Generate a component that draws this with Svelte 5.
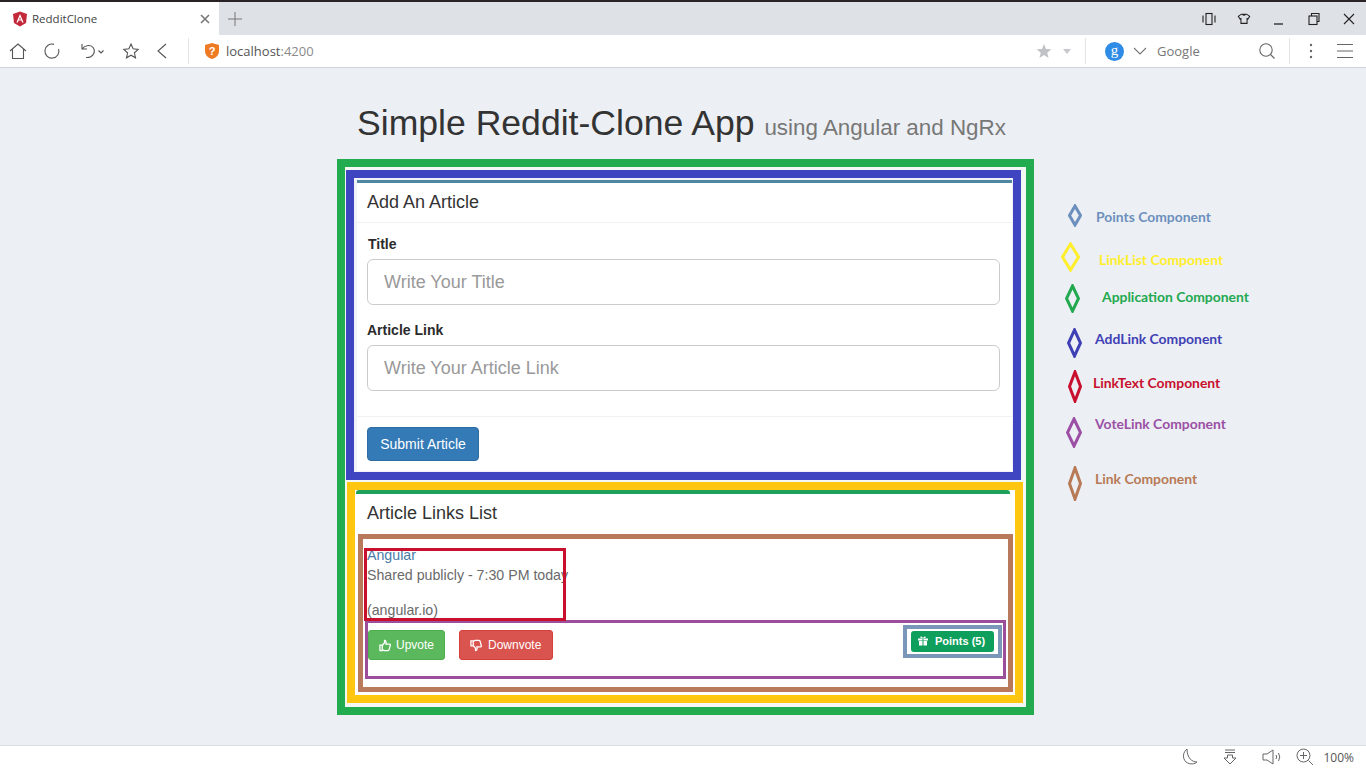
<script>
  // annotation key on the right of the page, placed freely like in the screenshot
  const legend = [
    { label: 'Points Component', color: '#6d8fbd', dx: 1068, dy: 204, w: 14, h: 23, tx: 1096, ty: 217 },
    { label: 'LinkList Component', color: '#ffee2b', dx: 1061, dy: 242, w: 19, h: 30, tx: 1099, ty: 260 },
    { label: 'Application Component', color: '#22a94f', dx: 1065, dy: 284, w: 15, h: 29, tx: 1102, ty: 297 },
    { label: 'AddLink Component', color: '#3f3fb5', dx: 1067, dy: 328, w: 15, h: 30, tx: 1095, ty: 339 },
    { label: 'LinkText Component', color: '#c8102e', dx: 1068, dy: 370, w: 14, h: 33, tx: 1093, ty: 383 },
    { label: 'VoteLink Component', color: '#9b4fa5', dx: 1066, dy: 417, w: 16, h: 31, tx: 1095, ty: 424 },
    { label: 'Link Component', color: '#b87a56', dx: 1068, dy: 466, w: 14, h: 35, tx: 1095, ty: 479 }
  ]
</script>

<div class="browser">
  <!-- tab strip -->
  <div class="tabstrip">
    <div class="tab">
      <svg class="favicon" width="16" height="16" viewBox="0 0 16 16">
        <path d="M8 0.5 L15 3 L14 12 L8 15.5 L2 12 L1 3 Z" fill="#c3273a" />
        <path d="M8 3 L4.4 11.5 H5.9 L6.6 9.6 H9.4 L10.1 11.5 H11.6 Z M7.1 8.4 L8 6 L8.9 8.4 Z" fill="#fff" />
      </svg>
      <span class="tab-title">RedditClone</span>
      <svg class="tab-close" width="10" height="10" viewBox="0 0 10 10">
        <path d="M1 1 L9 9 M9 1 L1 9" stroke="#777" stroke-width="1.6" />
      </svg>
    </div>
    <svg class="tab-new" width="14" height="14" viewBox="0 0 14 14">
      <path d="M7 0 V14 M0 7 H14" stroke="#777" stroke-width="1" />
    </svg>
    <div class="win-controls">
      <svg width="14" height="14" viewBox="0 0 14 14" fill="none" stroke="#222" stroke-width="1.1">
        <rect x="4" y="1.5" width="6" height="11" />
        <path d="M1 3.5 V10.5 M13 3.5 V10.5" />
      </svg>
      <svg width="14" height="14" viewBox="0 0 16 14" fill="none" stroke="#222" stroke-width="1.2">
        <path d="M5 1.5 H11 L14.5 4 L12.5 7 L11.5 6.5 V12 H4.5 V6.5 L3.5 7 L1.5 4 Z M6 1.5 Q8 4 10 1.5" />
      </svg>
      <svg width="14" height="14" viewBox="0 0 14 14" fill="none" stroke="#222" stroke-width="1.3">
        <path d="M2 12 H11" />
      </svg>
      <svg width="14" height="14" viewBox="0 0 14 14" fill="none" stroke="#222" stroke-width="1.1">
        <rect x="2" y="4" width="8" height="8.5" />
        <path d="M4.5 4 V1.5 H12 V9.5 H10" />
      </svg>
      <svg width="14" height="14" viewBox="0 0 14 14" fill="none" stroke="#222" stroke-width="1.1">
        <path d="M2 2 L12 12 M12 2 L2 12" />
      </svg>
    </div>
  </div>

  <!-- address toolbar -->
  <div class="toolbar">
    <svg class="t-home" width="20" height="20" viewBox="0 0 20 20" fill="none" stroke="#555" stroke-width="1.1">
      <path d="M2 10 L10 3 L18 10 M4.5 8.5 V17.5 H15.5 V8.5" />
    </svg>
    <svg class="t-reload" width="20" height="20" viewBox="0 0 20 20" fill="none" stroke="#555" stroke-width="1.1">
      <path d="M12 3.4 A7 7 0 1 0 16.6 8" />
    </svg>
    <svg class="t-undo" width="30" height="20" viewBox="0 0 30 20" fill="none" stroke="#555" stroke-width="1.1">
      <path d="M4 3 V8 H9 M4 8 C7 4 13 3 15.5 7 C18 12 14 17 8 16.5" />
      <path d="M20.5 9.5 L23 12 L25.5 9.5" />
    </svg>
    <svg class="t-star" width="20" height="20" viewBox="0 0 20 20" fill="none" stroke="#555" stroke-width="1.1">
      <path d="M10 3 L12.1 7.8 L17.2 8.4 L13.4 11.8 L14.5 16.8 L10 14.2 L5.5 16.8 L6.6 11.8 L2.8 8.4 L7.9 7.8 Z" />
    </svg>
    <svg class="t-back" width="20" height="20" viewBox="0 0 20 20" fill="none" stroke="#555" stroke-width="1.1">
      <path d="M14 3 L6 10 L14 17" />
    </svg>
    <span class="t-sep first"></span>
    <svg class="t-shield" width="16" height="18" viewBox="0 0 16 18">
      <path d="M8 1 L15 3 V9 C15 13 12 16 8 17 C4 16 1 13 1 9 V3 Z" fill="#ee7a22" />
      <text x="8" y="13" text-anchor="middle" class="shield-q">?</text>
    </svg>
    <span class="url">localhost<span class="port">:4200</span></span>

    <svg class="t-fav" width="16" height="16" viewBox="0 0 16 16">
      <path d="M8 1 L10 6 L15.4 6.3 L11.2 9.7 L12.6 15 L8 12 L3.4 15 L4.8 9.7 L0.6 6.3 L6 6 Z" fill="#bfc2c6" />
    </svg>
    <svg class="t-caret" width="8" height="5" viewBox="0 0 8 5"><path d="M0 0 H8 L4 5 Z" fill="#c6c8cc" /></svg>
    <span class="t-sep second"></span>
    <span class="g-badge">g</span>
    <svg class="t-chev" width="14" height="8" viewBox="0 0 14 8" fill="none" stroke="#777" stroke-width="1.1">
      <path d="M1 1 L7 7 L13 1" />
    </svg>
    <span class="search-text">Google</span>
    <svg class="t-search" width="18" height="18" viewBox="0 0 18 18" fill="none" stroke="#666" stroke-width="1.1">
      <circle cx="8" cy="8" r="6.2" />
      <path d="M12.5 12.5 L16.5 16.5" />
    </svg>
    <span class="t-sep third"></span>
    <svg class="t-dots" width="4" height="16" viewBox="0 0 4 16" fill="#666">
      <circle cx="2" cy="2" r="1.2" /><circle cx="2" cy="8" r="1.2" /><circle cx="2" cy="14" r="1.2" />
    </svg>
    <svg class="t-menu" width="16" height="16" viewBox="0 0 16 16" stroke="#666" stroke-width="1">
      <path d="M0 1.5 H16 M0 8 H16 M0 14.5 H16" />
    </svg>
  </div>

  <!-- page -->
  <main class="page">
    <h1>Simple Reddit-Clone App <small>using Angular and NgRx</small></h1>

    <div class="app-frame">
      <section class="addlink-frame">
        <div class="panel add-panel">
          <h3 class="panel-heading">Add An Article</h3>
          <div class="panel-body">
            <label for="title">Title</label>
            <input id="title" placeholder="Write Your Title" />
            <label for="link" class="second-label">Article Link</label>
            <input id="link" placeholder="Write Your Article Link" />
          </div>
          <div class="panel-footer">
            <button class="btn-submit">Submit Article</button>
          </div>
        </div>
      </section>

      <section class="list-frame">
        <div class="list-panel">
          <h3 class="panel-heading">Article Links List</h3>
        </div>
        <div class="link-frame">
          <div class="link-text">
            <a href="#top">Angular</a>
            <div>Shared publicly - 7:30 PM today</div>
            <div class="domain">(angular.io)</div>
            <span class="linktext-outline"></span>
          </div>
          <div class="vote-frame">
            <div class="votes">
              <button class="btn up">
                <svg width="12" height="13" viewBox="0 0 13 13" fill="none" stroke="#fff" stroke-width="1.4">
                  <path d="M1 6 H3.5 V12 H1 Z M3.5 6.5 L6 3.5 V1 C7.5 1 8 2.5 7.5 5 H11.5 C12.5 5 12.5 6 12 7 L11 11 C10.8 11.8 10.4 12 9.5 12 H5.5 L3.5 11" />
                </svg>
                Upvote
              </button>
              <button class="btn down">
                <svg width="12" height="13" viewBox="0 0 13 13" fill="none" stroke="#fff" stroke-width="1.4">
                  <path d="M1 1.5 H3.5 V7 H1 Z M3.5 6.5 L6 9.5 V12 C7.5 12 8 10.5 7.5 8 H11.5 C12.5 8 12.5 7 12 6 L11 2 C10.8 1.2 10.4 1 9.5 1 H5.5 L3.5 2" />
                </svg>
                Downvote
              </button>
            </div>
            <div class="points-frame">
              <button class="btn-points">
                <svg width="10" height="10" viewBox="0 0 10 10" fill="#fff">
                  <path d="M0 2.5 H4.5 V4.5 H0 Z M5.5 2.5 H10 V4.5 H5.5 Z M1 5 H4.5 V9.5 H1 Z M5.5 5 H9 V9.5 H5.5 Z" />
                  <path d="M5 2.5 C3 2.5 1.5 1.5 2.5 0.6 C3.5 0 4.6 1 5 2.5 C5.4 1 6.5 0 7.5 0.6 C8.5 1.5 7 2.5 5 2.5 Z" />
                </svg>
                Points (5)
              </button>
            </div>
          </div>
        </div>
      </section>
    </div>

    {#each legend as item}
      <svg
        class="diamond"
        style="left:{item.dx}px; top:{item.dy - 68}px"
        width={item.w}
        height={item.h}
        viewBox="0 0 {item.w} {item.h}"
      >
        <polygon
          points="{item.w / 2},2 {item.w - 1.5},{item.h / 2} {item.w / 2},{item.h - 2} 1.5,{item.h / 2}"
          fill="none"
          stroke={item.color}
          stroke-width="3"
        />
      </svg>
      <span class="legend-label" style="left:{item.tx}px; top:{item.ty - 68 - 9}px; color:{item.color}">{item.label}</span>
    {/each}
  </main>

  <!-- status bar -->
  <div class="statusbar">
    <svg class="s-moon" width="16" height="18" viewBox="0 0 16 18" fill="none" stroke="#666" stroke-width="1">
      <path d="M5 1 C1 4 0 10 4 14 C8 17 13 16 15 14 C10 14 5 10 5 1 Z" />
    </svg>
    <svg class="s-down" width="14" height="16" viewBox="0 0 14 16" fill="none" stroke="#666" stroke-width="1">
      <path d="M2 1 H12 M2 3.5 H12 M4.5 6 H9.5 V9 H13 L7 15 L1 9 H4.5 Z" />
    </svg>
    <svg class="s-sound" width="20" height="16" viewBox="0 0 20 16" fill="none" stroke="#666" stroke-width="1">
      <path d="M1 5 H5 L11 1 V15 L5 11 H1 Z M14 6 Q15.5 8 14 10 M16.5 4 Q19 8 16.5 12" />
    </svg>
    <svg class="s-zoom" width="18" height="18" viewBox="0 0 18 18" fill="none" stroke="#666" stroke-width="1">
      <circle cx="7.5" cy="7.5" r="6.5" />
      <path d="M7.5 4 V11 M4 7.5 H11 M12.5 12.5 L17 17" />
    </svg>
    <span class="zoom-level">100%</span>
  </div>
</div>

<style>
  :global(body) {
    margin: 0;
    overflow: hidden;
    font-family: "Liberation Sans", Arial, sans-serif;
  }

  .browser {
    width: 1366px;
    height: 768px;
    display: flex;
    flex-direction: column;
    background: #eceff4;
  }

  /* ---- browser chrome ---- */
  .tabstrip {
    height: 33px;
    border-top: 2px solid #2a2326;
    background: #dee1e6;
    display: flex;
    align-items: center;
    flex-shrink: 0;
  }

  .tab {
    width: 219px;
    height: 33px;
    background: #fff;
    display: flex;
    align-items: center;
    box-sizing: border-box;
    padding-left: 12px;
  }

  .tab-title {
    font-family: "Open Sans", sans-serif;
    font-size: 11.5px;
    color: #444;
    margin-left: 4px;
  }

  .tab-close {
    margin-left: auto;
    margin-right: 9px;
  }

  .tab-new {
    margin-left: 9px;
  }

  .win-controls {
    margin-left: auto;
    display: flex;
    align-items: center;
    gap: 21px;
    padding-right: 10px;
  }

  .toolbar {
    height: 32px;
    background: #fff;
    border-bottom: 1px solid #cfd3da;
    display: flex;
    align-items: center;
    flex-shrink: 0;
    padding-left: 8px;
  }

  .t-reload { margin-left: 14px; }
  .t-undo { margin-left: 16px; }
  .t-star { margin-left: 13px; }
  .t-back { margin-left: 11px; }

  .t-sep {
    width: 1px;
    height: 26px;
    background: #e3e5e8;
  }

  .t-sep.first { margin-left: 16px; }
  .t-shield { margin-left: 15px; }

  .shield-q {
    font-family: "Liberation Sans", sans-serif;
    font-size: 11px;
    font-weight: 700;
    fill: #fff;
  }

  .url {
    margin-left: 6px;
    font-family: "Open Sans", sans-serif;
    font-size: 13px;
    color: #555;
    width: 90px;
  }

  .port { color: #8a8a8a; }

  .t-fav { margin-left: 720px; }
  .t-caret { margin-left: 11px; }
  .t-sep.second { margin-left: 14px; }

  .g-badge {
    margin-left: 19px;
    width: 19px;
    height: 19px;
    border-radius: 50%;
    background: #2e8be6;
    color: #fff;
    font-family: "Liberation Serif", serif;
    font-size: 15px;
    line-height: 16px;
    text-align: center;
  }

  .t-chev { margin-left: 9px; }

  .search-text {
    margin-left: 10px;
    font-family: "Open Sans", sans-serif;
    font-size: 13px;
    color: #777;
    width: 101px;
  }

  .t-search { margin-left: 0; }
  .t-sep.third { margin-left: 13px; }
  .t-dots { margin-left: 19px; }
  .t-menu { margin-left: 24px; }

  .statusbar {
    height: 22px;
    background: #fff;
    border-top: 1px solid #dcdfe4;
    display: flex;
    align-items: center;
    justify-content: flex-end;
    flex-shrink: 0;
    padding-right: 12px;
  }

  .s-down { margin-left: 25px; }
  .s-sound { margin-left: 25px; }
  .s-zoom { margin-left: 14px; }

  .zoom-level {
    margin-left: 9px;
    font-family: "Open Sans", sans-serif;
    font-size: 12px;
    color: #555;
  }

  /* ---- page ---- */
  .page {
    flex: 1;
    position: relative;
  }

  h1 {
    margin: 0;
    padding: 36px 0 0 357px;
    height: 55px;
    font-size: 35.6px;
    font-weight: 400;
    line-height: 39px;
    color: #333;
  }

  h1 small {
    font-size: 22.4px;
    color: #777;
  }

  .app-frame {
    box-sizing: border-box;
    margin-left: 337px;
    width: 697px;
    height: 556px;
    border: 8px solid #22ab4f;
    background: #f4f8f4;
    padding: 3px 0 0 1px;
  }

  .addlink-frame {
    box-sizing: border-box;
    width: 675px;
    height: 310px;
    border: 8px solid #3f44c0;
    padding: 2px 1px 1px 3px;
    background: #f0f2fa;
  }

  .add-panel {
    height: 100%;
    border-top: 3px solid #4f87a0;
    background: #fff;
    box-sizing: border-box;
  }

  .panel-heading {
    margin: 0;
    height: 40px;
    box-sizing: border-box;
    padding: 0 10px;
    font-size: 18px;
    font-weight: 400;
    line-height: 39px;
    color: #333;
    border-bottom: 1px solid #f1f1f1;
  }

  .panel-body {
    padding: 13px 11px 0 10px;
    height: 194px;
    box-sizing: border-box;
    border-bottom: 1px solid #f1f1f1;
  }

  label {
    display: block;
    margin-left: 1px;
    font-size: 14px;
    font-weight: 700;
    line-height: 16px;
    color: #2b2b2b;
    margin-bottom: 7px;
  }

  .second-label {
    margin-top: 17px;
    margin-left: 0;
  }

  input {
    display: block;
    box-sizing: border-box;
    width: 633px;
    height: 46px;
    padding: 0 16px;
    border: 1px solid #ccc;
    border-radius: 6px;
    background: #fff;
    font-family: inherit;
    font-size: 18px;
    color: #555;
  }

  input::placeholder {
    color: #999;
    opacity: 1;
  }

  .panel-footer {
    padding: 10px;
  }

  .btn-submit {
    width: 112px;
    height: 34px;
    border: 1px solid #2e6da4;
    border-radius: 4px;
    background: #337ab7;
    color: #fff;
    font-family: inherit;
    font-size: 14px;
    padding: 0;
  }

  .list-frame {
    box-sizing: border-box;
    margin: 2px 0 0 1px;
    width: 676px;
    height: 221px;
    border: 8px solid #fec60f;
    background: #fff;
  }

  .list-panel {
    margin: 0 5px 0 1px;
    border-top: 4px solid #1ea25b;
    border-radius: 3px 3px 0 0;
  }

  .list-panel .panel-heading {
    border-bottom: none;
    padding: 0 11px;
  }

  .link-frame {
    box-sizing: border-box;
    width: 655px;
    height: 158px;
    margin-left: 3px;
    border: 5px solid #b87a5a;
    padding-top: 6px;
    font-size: 14.2px;
    line-height: 20px;
    color: #6a6a6a;
  }

  .link-text {
    position: relative;
    height: 75px;
    padding-left: 4px;
  }

  .link-text a {
    color: #4a7ba6;
    text-decoration: none;
    display: block;
  }

  .domain {
    margin-top: 15px;
  }

  /* red annotation box drawn over the text */
  .linktext-outline {
    position: absolute;
    left: 1px;
    top: 3px;
    width: 202px;
    height: 73px;
    box-sizing: border-box;
    border: 3px solid #c8102e;
  }

  .vote-frame {
    box-sizing: border-box;
    width: 641px;
    height: 59px;
    margin-left: 2px;
    border: 3px solid #9b4f9b;
    display: flex;
    justify-content: space-between;
    align-items: flex-start;
    padding-right: 1px;
  }

  .votes {
    display: flex;
    gap: 14px;
    padding-top: 7px;
  }

  .btn {
    height: 30px;
    border-radius: 3px;
    color: #fff;
    font-family: inherit;
    font-size: 12px;
    display: flex;
    align-items: center;
    gap: 5px;
    box-sizing: border-box;
    padding: 0 0 0 10px;
  }

  .up {
    width: 77px;
    background: #5cb85c;
    border: 1px solid #4cae4c;
  }

  .down {
    width: 94px;
    background: #d9534f;
    border: 1px solid #d43f3a;
    gap: 6px;
  }

  .points-frame {
    margin-top: 2px;
    box-sizing: border-box;
    width: 99px;
    height: 33px;
    border: 4px solid #7a96b8;
    padding: 2px 4px;
  }

  .btn-points {
    width: 83px;
    height: 21px;
    background: #0f9f5c;
    border: none;
    border-radius: 3px;
    color: #fff;
    font-family: inherit;
    font-size: 11px;
    font-weight: 700;
    display: flex;
    align-items: center;
    gap: 7px;
    padding: 0 0 2px 7px;
    box-sizing: border-box;
    white-space: nowrap;
  }

  /* ---- annotation key ---- */
  .diamond {
    position: absolute;
  }

  .legend-label {
    position: absolute;
    font-family: Lato, sans-serif;
    font-size: 13.9px;
    font-weight: 700;
    line-height: 18px;
    white-space: nowrap;
  }
</style>
